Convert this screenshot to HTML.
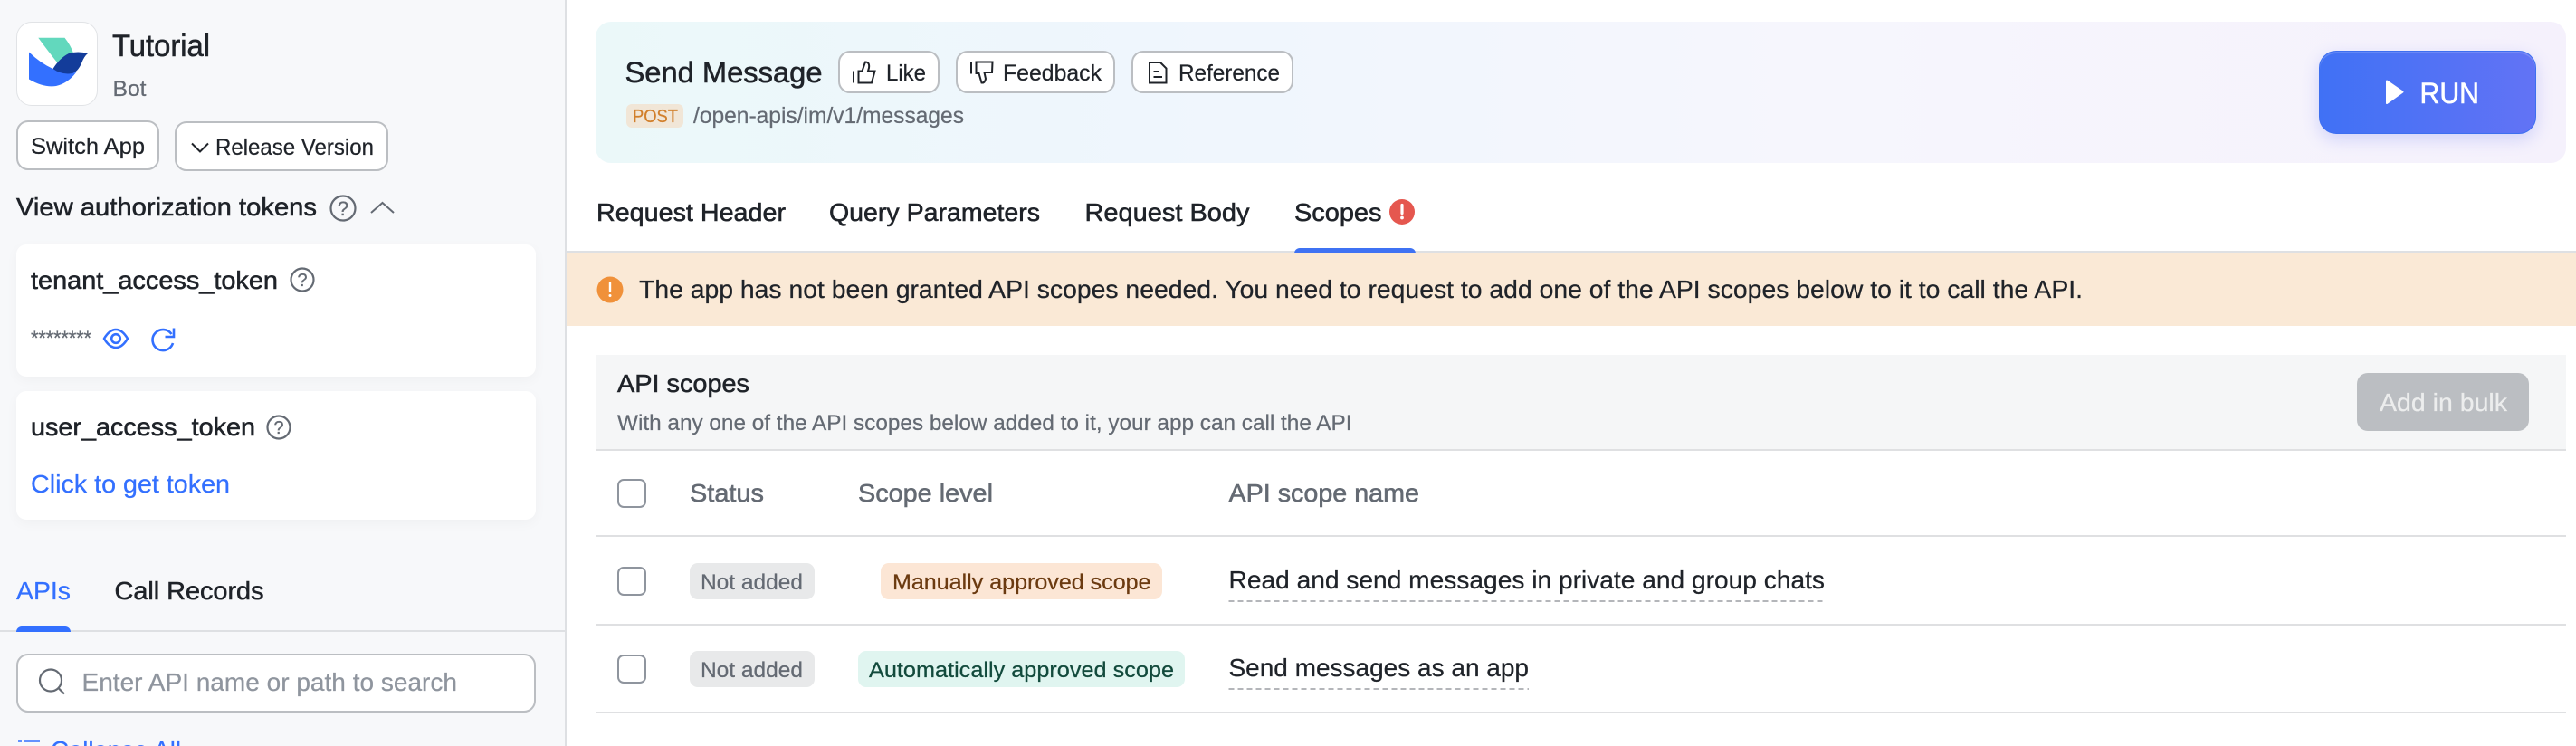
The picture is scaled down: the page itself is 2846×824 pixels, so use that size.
<!DOCTYPE html>
<html lang="en">
<head>
<meta charset="utf-8">
<title>Send Message - API Explorer</title>
<style>
html,body{margin:0;padding:0;width:2846px;height:824px;overflow:hidden;background:#fff}
.b{position:absolute;box-sizing:border-box}
svg{position:absolute;left:0;top:0}
text{font-family:"Liberation Sans",Arial,sans-serif;color:#1f2329;fill:currentColor;stroke:currentColor;stroke-width:.25px;white-space:pre}
.m{stroke-width:.55px}
.g{color:#646a73}
.l{color:#3370ff}
.btn{background:#fff;border:2px solid #bbbec2;border-radius:13px}
.card{background:#fff;border-radius:11px;box-shadow:0 4px 14px rgba(31,35,41,.035)}
.tag{border-radius:9px}
.line{background:#dfe0e2;height:2px}
.cb{background:#fff;border:2.5px solid #8f959e;border-radius:7px;width:32px;height:32px}
</style>
</head>
<body>
<!-- sidebar -->
<div class="b" style="left:0;top:0;width:626px;height:824px;background:#f7f8fa;border-right:2px solid #dee0e3"></div>
<div class="b" style="left:18px;top:24px;width:90px;height:93px;background:#fff;border:1.5px solid #e1e3e6;border-radius:17px"></div>
<div class="b btn" style="left:18px;top:133px;width:158px;height:55px"></div>
<div class="b btn" style="left:193px;top:134px;width:236px;height:55px"></div>
<div class="b card" style="left:18px;top:270px;width:574px;height:146px"></div>
<div class="b card" style="left:18px;top:432px;width:574px;height:142px"></div>
<div class="b" style="left:0;top:696px;width:624px;height:2px;background:#dee0e3"></div>
<div class="b" style="left:18px;top:692px;width:60px;height:6px;background:#3370ff;border-radius:6px 6px 0 0"></div>
<div class="b btn" style="left:18px;top:722px;width:574px;height:65px"></div>

<!-- header card -->
<div class="b" style="left:658px;top:24px;width:2177px;height:156px;border-radius:17px;background:linear-gradient(90deg,#ebf8f9 0%,#eff6fd 28%,#f6f6fd 62%,#f5f1fc 100%)"></div>
<div class="b btn" style="left:926px;top:56px;width:112px;height:47px"></div>
<div class="b btn" style="left:1056px;top:56px;width:176px;height:47px"></div>
<div class="b btn" style="left:1250px;top:56px;width:179px;height:47px"></div>
<div class="b tag" style="left:692px;top:115px;width:63px;height:26px;background:#f1e6d7;border-radius:6px"></div>
<div class="b" style="left:2562px;top:56px;width:240px;height:92px;border-radius:19px;background:linear-gradient(90deg,#4071f5,#6273f5);border:1.5px solid #3d6ff0;box-shadow:inset 0 2px 0 rgba(255,255,255,.16),0 6px 18px rgba(80,100,240,.22)"></div>

<!-- tabs + banner -->
<div class="b" style="left:626px;top:277px;width:2220px;height:2px;background:#dee0e3"></div>
<div class="b" style="left:1430px;top:274px;width:134px;height:6px;background:#3f72f3;border-radius:6px 6px 0 0"></div>
<div class="b" style="left:626px;top:279px;width:2220px;height:81px;background:#fae9d6"></div>

<!-- scopes panel -->
<div class="b" style="left:658px;top:392px;width:2177px;height:104px;background:#f5f6f7"></div>
<div class="b" style="left:2604px;top:412px;width:190px;height:64px;background:#bbbec2;border-radius:12px"></div>
<div class="b line" style="left:658px;top:496px;width:2177px"></div>
<div class="b line" style="left:658px;top:591px;width:2177px"></div>
<div class="b line" style="left:658px;top:689px;width:2177px"></div>
<div class="b line" style="left:658px;top:786px;width:2177px"></div>
<div class="b cb" style="left:682px;top:529px"></div>
<div class="b cb" style="left:682px;top:626px"></div>
<div class="b cb" style="left:682px;top:723px"></div>
<div class="b tag" style="left:762px;top:622px;width:138px;height:40px;background:#e8e9ea"></div>
<div class="b tag" style="left:762px;top:719px;width:138px;height:40px;background:#e8e9ea"></div>
<div class="b tag" style="left:973px;top:622px;width:311px;height:40px;background:#fce6d5"></div>
<div class="b tag" style="left:948px;top:719px;width:361px;height:40px;background:#e0f5f0"></div>

<svg width="2846" height="824" viewBox="0 0 2846 824" xmlns="http://www.w3.org/2000/svg">
<!-- logo -->
<path d="M42.300 41.700H71.500Q78 50 81 58.500 72 62 65.500 72 52 55 42.300 41.700Z" fill="#62d8bd"/>
<path d="M32 57.500Q45 70 58.500 76 70 81 84 80 75 92 62 95 48 97 32 87.500Z" fill="#3370ff"/>
<path d="M58.500 76Q66 64 76 59 86 56 97 59 93 62 90 70 86 79 80 81 68 83 58.500 76Z" fill="#133c9a"/>

<text class="m" x="124" y="62" font-size="34" textLength="108" lengthAdjust="spacingAndGlyphs">Tutorial</text>
<text class="g" x="124.500" y="106" font-size="24" textLength="37" lengthAdjust="spacingAndGlyphs">Bot</text>
<text x="34" y="170" font-size="25" textLength="126" lengthAdjust="spacingAndGlyphs">Switch App</text>
<path d="M212 158.500 221 167.500 230 158.500" fill="none" stroke="#1f2329" stroke-width="2"/>
<text x="238" y="171" font-size="25" textLength="175" lengthAdjust="spacingAndGlyphs">Release Version</text>
<text class="m" x="18" y="238" font-size="28" textLength="332" lengthAdjust="spacingAndGlyphs">View authorization tokens</text>
<circle cx="379" cy="230" r="13.500" fill="none" stroke="#646a73" stroke-width="2.200"/>
<text class="g" x="379" y="238" font-size="22" text-anchor="middle">?</text>
<path d="M410 235 422.500 224 435 235" fill="none" stroke="#646a73" stroke-width="2"/>

<text class="m" x="34" y="319" font-size="28" textLength="273" lengthAdjust="spacingAndGlyphs">tenant_access_token</text>
<circle cx="334" cy="309" r="12.500" fill="none" stroke="#646a73" stroke-width="2.200"/>
<text class="g" x="334" y="316" font-size="20" text-anchor="middle">?</text>
<text class="g" x="34" y="381" font-size="22" textLength="67" lengthAdjust="spacing">********</text>
<path d="M115 374Q121 364 128 364 135 364 141 374 135 384 128 384 121 384 115 374Z" fill="none" stroke="#3370ff" stroke-width="2.600" stroke-linejoin="round"/>
<circle cx="128" cy="374" r="4.800" fill="none" stroke="#3370ff" stroke-width="2.600"/>
<path d="M189.500 369A11.500 11.500 0 1 0 191 379" fill="none" stroke="#3370ff" stroke-width="2.600"/>
<path d="M192 362.500V372H182.500" fill="none" stroke="#3370ff" stroke-width="2.600"/>

<text class="m" x="34" y="481" font-size="28" textLength="248" lengthAdjust="spacingAndGlyphs">user_access_token</text>
<circle cx="308" cy="472" r="12.500" fill="none" stroke="#646a73" stroke-width="2.200"/>
<text class="g" x="308" y="479" font-size="20" text-anchor="middle">?</text>
<text class="l" x="34" y="544" font-size="28" textLength="220" lengthAdjust="spacingAndGlyphs">Click to get token</text>

<text class="l" x="18" y="662" font-size="28" textLength="60" lengthAdjust="spacingAndGlyphs">APIs</text>
<text class="m" x="126.500" y="662" font-size="28" textLength="165" lengthAdjust="spacingAndGlyphs">Call Records</text>
<circle cx="56" cy="751.500" r="12" fill="none" stroke="#646a73" stroke-width="2.200"/>
<path d="M64.500 760 71 766.500" stroke="#646a73" stroke-width="2.200" fill="none"/>
<text x="90.500" y="763" font-size="28" textLength="414.500" lengthAdjust="spacingAndGlyphs" style="color:#8f959e">Enter API name or path to search</text>
<path d="M20 818.500H24M27 818.500H44M20 828H24M27 828H44" stroke="#3370ff" stroke-width="2.400" fill="none"/>
<text class="l" x="56" y="838" font-size="28" textLength="144" lengthAdjust="spacingAndGlyphs">Collapse All</text>

<!-- header content -->
<text class="m" x="690.500" y="91" font-size="32" textLength="218" lengthAdjust="spacingAndGlyphs">Send Message</text>
<path d="M943 78.500V91.500M948.500 78.500H952.500L956 68.500Q961 68.500 960 75L959 78.500H966.500L963 91.500H948.500Z" fill="none" stroke="#1f2329" stroke-width="2"/>
<text x="979" y="89" font-size="25" textLength="44" lengthAdjust="spacingAndGlyphs">Like</text>
<path d="M1073 68.500V81.500M1078.500 68.500H1096.500L1096 80H1087.500L1089 87Q1088 92 1084.500 91.500L1081.500 81H1078.500Z" fill="none" stroke="#1f2329" stroke-width="2"/>
<text x="1108" y="89" font-size="25" textLength="109" lengthAdjust="spacingAndGlyphs">Feedback</text>
<path d="M1270 69H1282L1288.500 75.500V91.500H1270ZM1274.500 79H1280M1274.500 85H1284" fill="none" stroke="#1f2329" stroke-width="2"/>
<text x="1302" y="89" font-size="25" textLength="112" lengthAdjust="spacingAndGlyphs">Reference</text>
<text x="699" y="135" font-size="20" textLength="50" lengthAdjust="spacingAndGlyphs" style="color:#d17f2b">POST</text>
<text class="g" x="766" y="136" font-size="25" textLength="299" lengthAdjust="spacingAndGlyphs">/open-apis/im/v1/messages</text>

<path d="M2637 89.500 2654.500 101.500 2637 114Z" fill="#fff" stroke="#fff" stroke-width="2" stroke-linejoin="round"/>
<text class="m" x="2673.500" y="114" font-size="32" textLength="65.500" lengthAdjust="spacingAndGlyphs" style="color:#fff">RUN</text>

<!-- tabs -->
<text class="m" x="659" y="244" font-size="28" textLength="209" lengthAdjust="spacingAndGlyphs">Request Header</text>
<text class="m" x="916" y="244" font-size="28" textLength="233" lengthAdjust="spacingAndGlyphs">Query Parameters</text>
<text class="m" x="1198.500" y="244" font-size="28" textLength="182" lengthAdjust="spacingAndGlyphs">Request Body</text>
<text class="m" x="1430" y="244" font-size="28" textLength="96.500" lengthAdjust="spacingAndGlyphs">Scopes</text>
<circle cx="1549" cy="234" r="14" fill="#e5574f"/>
<path d="M1549 226.500V235.500" stroke="#fff" stroke-width="3.200" stroke-linecap="round"/>
<circle cx="1549" cy="240.500" r="1.900" fill="#fff"/>

<!-- banner -->
<circle cx="674" cy="320" r="14.500" fill="#f0913a"/>
<path d="M674 312.500V321.500" stroke="#fff" stroke-width="2.400" stroke-linecap="round"/>
<circle cx="674" cy="326.500" r="1.500" fill="#fff"/>
<text x="706" y="329" font-size="28" textLength="1595" lengthAdjust="spacingAndGlyphs">The app has not been granted API scopes needed. You need to request to add one of the API scopes below to it to call the API.</text>

<!-- scopes panel text -->
<text class="m" x="682" y="433" font-size="28" textLength="146" lengthAdjust="spacingAndGlyphs">API scopes</text>
<text class="g" x="682" y="475" font-size="24" textLength="811.500" lengthAdjust="spacingAndGlyphs">With any one of the API scopes below added to it, your app can call the API</text>
<text x="2629" y="454" font-size="28" textLength="141" lengthAdjust="spacingAndGlyphs" style="color:#eceded">Add in bulk</text>

<text class="g m" x="762" y="554" font-size="28" textLength="82" lengthAdjust="spacingAndGlyphs">Status</text>
<text class="g m" x="948" y="554" font-size="28" textLength="149" lengthAdjust="spacingAndGlyphs">Scope level</text>
<text class="g m" x="1357.500" y="554" font-size="28" textLength="210.500" lengthAdjust="spacingAndGlyphs">API scope name</text>

<text class="g" x="774" y="651" font-size="24" textLength="113" lengthAdjust="spacingAndGlyphs">Not added</text>
<text x="986" y="651" font-size="24" textLength="285.500" lengthAdjust="spacingAndGlyphs" style="color:#6b3a10">Manually approved scope</text>
<text x="1357.500" y="650" font-size="28" textLength="658.500" lengthAdjust="spacingAndGlyphs">Read and send messages in private and group chats</text>
<path d="M1357.500 664H2016.500" stroke="#b4b6ba" stroke-width="2" stroke-dasharray="6 4" fill="none"/>

<text class="g" x="774" y="748" font-size="24" textLength="113" lengthAdjust="spacingAndGlyphs">Not added</text>
<text x="960" y="748" font-size="24" textLength="337" lengthAdjust="spacingAndGlyphs" style="color:#124a3c">Automatically approved scope</text>
<text x="1357.500" y="747" font-size="28" textLength="331.500" lengthAdjust="spacingAndGlyphs">Send messages as an app</text>
<path d="M1357.500 761H1689" stroke="#b4b6ba" stroke-width="2" stroke-dasharray="6 4" fill="none"/>
</svg>
</body>
</html>
